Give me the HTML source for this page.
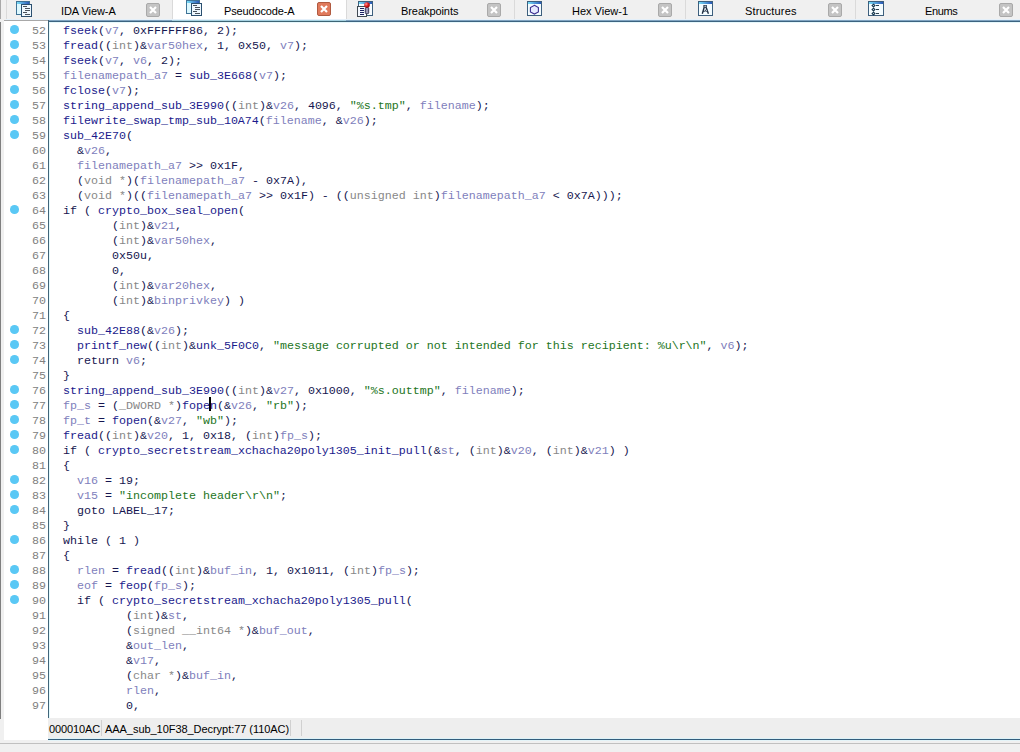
<!DOCTYPE html>
<html><head><meta charset="utf-8">
<style>
*{margin:0;padding:0;box-sizing:border-box}
html,body{width:1020px;height:752px;overflow:hidden;background:#f0f0f0}
body{position:relative;font-family:"Liberation Sans",sans-serif}
.abs{position:absolute}
#lstrip{position:absolute;left:0;top:0;width:1px;height:19px;background:#a9a9a9}
#lstrip2{position:absolute;left:0;top:22px;width:1px;height:697px;background:#7f7f7f}
.sep{position:absolute;top:0;width:1px;height:19px;background:#dadada}
.tab{position:absolute;top:0;height:20px}
.tabtxt{position:absolute;top:5px;font-size:11px;color:#000;white-space:nowrap;line-height:13px}
.close{position:absolute;top:3px;width:14px;height:14px;border-radius:2px;background:#c4c4c4;border:1px solid #a9a9a9}
.close.act{background:#e07a5c;border-color:#b05a40;top:2px}
.close svg{position:absolute;left:-1px;top:-1px}
#gutter{position:absolute;left:4px;top:21px;width:44px;height:719px;background:#fff}
#gtop{position:absolute;left:4px;top:20px;width:44px;height:1px;background:#a8a8a8}
#ctop1{position:absolute;left:48px;top:20px;width:972px;height:1px;background:#7fa3c0}
#tb19{position:absolute;left:6px;top:19px;width:1014px;height:1px;background:#e4f0fa}
#act20{position:absolute;left:172px;top:20px;width:174px;height:1px;background:#a6d2e2}
#ctop2{position:absolute;left:48px;top:21px;width:972px;height:1px;background:#3c6380}
#act21{position:absolute;left:172px;top:21px;width:174px;height:1px;background:#3d6575}
#cleft{position:absolute;left:48px;top:20px;width:1px;height:698px;background:#41657a}
#code{position:absolute;left:49px;top:22px;width:971px;height:696px;background:#fff;overflow:hidden}
#lines{position:absolute;left:14px;top:2px;font-family:"Liberation Mono",monospace;font-size:11.667px;letter-spacing:0;line-height:15px;color:#161650;white-space:pre}
i.f{color:#1a1a8c}
#nums{position:absolute;left:4px;width:42px;top:24px;font-family:"Liberation Mono",monospace;font-size:11.667px;letter-spacing:0;line-height:15px;color:#808080;text-align:right;white-space:pre}
i{font-style:normal}
i.v{color:#8080bc}
i.t{color:#888888}
i.s{color:#237523}
.dot{position:absolute;left:10px;width:8.7px;height:8.6px;border-radius:50%;background:#5ac8f5}
#cursor{position:absolute;left:209px;top:397px;width:2px;height:14px;background:#000}
#status{position:absolute;left:48px;top:718px;width:972px;height:21px;background:#eeeeee}
#sbot{position:absolute;left:48px;top:739px;width:972px;height:1px;background:#335d7c}
#hline{position:absolute;left:0;top:743px;width:1020px;height:1px;background:#c0c0c0}
.stxt{position:absolute;top:723px;font-size:11px;line-height:13px;color:#000;white-space:nowrap}
.ssep{position:absolute;top:720px;width:1px;height:16px;background:#d0d0d0}
</style></head><body>
<div id="lstrip"></div><div id="lstrip2"></div>
<!-- tabs -->
<div class="abs" style="left:172px;top:0;width:174px;height:20px;background:#fff"></div>
<div class="sep" style="left:6px"></div>
<div class="sep" style="left:172px"></div>
<div class="sep" style="left:346px"></div>
<div class="sep" style="left:514px"></div>
<div class="sep" style="left:685px"></div>
<div class="sep" style="left:855px"></div>

<svg width="0" height="0" style="position:absolute"><defs>
<linearGradient id="tg" x1="0" x2="1" y1="0" y2="0"><stop offset="0" stop-color="#78e0fa"/><stop offset="1" stop-color="#2a58b8"/></linearGradient>
<radialGradient id="rb" cx="0.35" cy="0.35" r="0.7"><stop offset="0" stop-color="#ff9a9a"/><stop offset="0.5" stop-color="#e02020"/><stop offset="1" stop-color="#8a0000"/></radialGradient>
</defs></svg>
<svg class="abs" style="left:16px;top:1px" width="17" height="17" shape-rendering="crispEdges"><rect x="0" y="0" width="14" height="14" fill="#3f7396"/><rect x="1" y="1" width="12" height="2" fill="url(#tg)"/><rect x="1" y="3" width="12" height="10" fill="#dcf8ff"/>
<rect x="5" y="3" width="11" height="13" fill="#2b4f6f"/><rect x="6" y="4" width="9" height="11" fill="#eef8ff"/>
<g fill="#4a525c"><rect x="7" y="5" width="4" height="1"/><rect x="9" y="7" width="5" height="1"/><rect x="9" y="9" width="5" height="1"/><rect x="7" y="11" width="4" height="1"/><rect x="9" y="13" width="5" height="1"/></g></svg>
<svg class="abs" style="left:186px;top:0px" width="17" height="17" shape-rendering="crispEdges"><rect x="0" y="0" width="14" height="14" fill="#3f7396"/><rect x="1" y="1" width="12" height="2" fill="url(#tg)"/><rect x="1" y="3" width="12" height="10" fill="#dcf8ff"/>
<rect x="5" y="3" width="11" height="13" fill="#2b4f6f"/><rect x="6" y="4" width="9" height="11" fill="#eef8ff"/>
<g fill="#4a525c"><rect x="7" y="5" width="4" height="1"/><rect x="9" y="7" width="5" height="1"/><rect x="9" y="9" width="5" height="1"/><rect x="7" y="11" width="4" height="1"/><rect x="9" y="13" width="5" height="1"/></g></svg>
<svg class="abs" style="left:357px;top:1px" width="17" height="17">
<g shape-rendering="crispEdges"><rect x="1" y="0" width="15" height="15" fill="#3d5f7d"/><rect x="2" y="1" width="13" height="2" fill="url(#tg)"/><rect x="2" y="3" width="13" height="11" fill="#f8fcff"/>
<rect x="0" y="5" width="10" height="11" fill="#404a52"/><rect x="1" y="6" width="8" height="9" fill="#f4f8ff"/>
<g fill="#1a2060"><rect x="3" y="7" width="4" height="1"/><rect x="3" y="9" width="4" height="1"/><rect x="3" y="11" width="4" height="1"/><rect x="3" y="13" width="4" height="1"/></g></g>
<rect x="8.3" y="6.5" width="3.4" height="6.2" rx="1" fill="#9a98b8" stroke="#2a2a48" stroke-width="0.9"/>
<circle cx="10" cy="4" r="2.8" fill="url(#rb)"/>
</svg>
<svg class="abs" style="left:527px;top:1px" width="16" height="16"><g shape-rendering="crispEdges"><rect x="0" y="0" width="15" height="15" fill="#3d5f7d"/><rect x="1" y="1" width="13" height="2" fill="url(#tg)"/><rect x="1" y="3" width="13" height="11" fill="#f4fcff"/></g>
<polygon points="7.4,4.3 11.4,6.5 11.4,10.9 7.4,13.1 3.4,10.9 3.4,6.5" fill="#e6eaff" stroke="#3b2d8f" stroke-width="1.1"/></svg>
<svg class="abs" style="left:698px;top:1px" width="16" height="16"><g shape-rendering="crispEdges"><rect x="0" y="0" width="15" height="15" fill="#3d5f7d"/><rect x="1" y="1" width="13" height="2" fill="url(#tg)"/><rect x="1" y="3" width="13" height="11" fill="#f4fcff"/></g>
<rect x="5.4" y="4" width="3.4" height="2.8" fill="#1c2c40"/><circle cx="7.1" cy="5.3" r="0.75" fill="#e8eef8"/>
<path d="M6.1 6.6L4.3 12.8M8.2 6.6L10.4 12.8" stroke="#1c2c40" stroke-width="1.4" fill="none"/>
<circle cx="8.4" cy="9.5" r="0.9" fill="#f0f4ff" stroke="#1c2c40" stroke-width="0.8"/><path d="M5.2 10.6L7.6 9.9" stroke="#1c2c40" stroke-width="0.9"/>
</svg>
<svg class="abs" style="left:868px;top:1px" width="16" height="16"><g shape-rendering="crispEdges"><rect x="0" y="0" width="16" height="15" fill="#3d5f7d"/><rect x="1" y="1" width="14" height="2" fill="url(#tg)"/><rect x="1" y="3" width="14" height="11" fill="#f4fcff"/></g>
<g fill="#e0f4ff" stroke="#16364c" stroke-width="1.1"><path d="M5.5 3.2L6.9 4.6L5.5 6L4.1 4.6Z"/><path d="M5.5 7.2L6.9 8.6L5.5 10L4.1 8.6Z"/><path d="M5.5 11.2L6.9 12.6L5.5 14L4.1 12.6Z"/></g>
<g fill="#2a4050" shape-rendering="crispEdges"><rect x="8" y="4" width="3" height="1"/><rect x="8" y="8" width="3" height="1"/><rect x="8" y="12" width="3" height="1"/></g>
</svg>
<div class="tabtxt" style="left:61px;letter-spacing:-0.07px">IDA View-A</div>
<div class="tabtxt" style="left:224px;letter-spacing:-0.15px">Pseudocode-A</div>
<div class="tabtxt" style="left:401px;letter-spacing:-0.07px">Breakpoints</div>
<div class="tabtxt" style="left:572px">Hex View-1</div>
<div class="tabtxt" style="left:745px;letter-spacing:0.14px">Structures</div>
<div class="tabtxt" style="left:925px;letter-spacing:-0.35px">Enums</div>

<div class="close" style="left:146px"><svg width="14" height="14"><path d="M4 4L10 10M10 4L4 10" stroke="#fff" stroke-width="2.2"/></svg></div>
<div class="close act" style="left:317px"><svg width="14" height="14"><path d="M4 4L10 10M10 4L4 10" stroke="#fff" stroke-width="2.2"/></svg></div>
<div class="close" style="left:487px"><svg width="14" height="14"><path d="M4 4L10 10M10 4L4 10" stroke="#fff" stroke-width="2.2"/></svg></div>
<div class="close" style="left:658px"><svg width="14" height="14"><path d="M4 4L10 10M10 4L4 10" stroke="#fff" stroke-width="2.2"/></svg></div>
<div class="close" style="left:828px"><svg width="14" height="14"><path d="M4 4L10 10M10 4L4 10" stroke="#fff" stroke-width="2.2"/></svg></div>
<div class="close" style="left:999px"><svg width="14" height="14"><path d="M4 4L10 10M10 4L4 10" stroke="#fff" stroke-width="2.2"/></svg></div>

<!-- panel -->
<div id="gutter"></div><div id="gtop"></div>
<div id="code"><div id="lines"><div><i class="f">fseek</i>(<i class="v">v7</i>, 0xFFFFFF86, 2);</div><div><i class="f">fread</i>((<i class="t">int</i>)&amp;<i class="v">var50hex</i>, 1, 0x50, <i class="v">v7</i>);</div><div><i class="f">fseek</i>(<i class="v">v7</i>, <i class="v">v6</i>, 2);</div><div><i class="v">filenamepath_a7</i> = <i class="f">sub_3E668</i>(<i class="v">v7</i>);</div><div><i class="f">fclose</i>(<i class="v">v7</i>);</div><div><i class="f">string_append_sub_3E990</i>((<i class="t">int</i>)&amp;<i class="v">v26</i>, 4096, <i class="s">&quot;%s.tmp&quot;</i>, <i class="v">filename</i>);</div><div><i class="f">filewrite_swap_tmp_sub_10A74</i>(<i class="v">filename</i>, &amp;<i class="v">v26</i>);</div><div><i class="f">sub_42E70</i>(</div><div>  &amp;<i class="v">v26</i>,</div><div>  <i class="v">filenamepath_a7</i> &gt;&gt; 0x1F,</div><div>  (<i class="t">void *</i>)(<i class="v">filenamepath_a7</i> - 0x7A),</div><div>  (<i class="t">void *</i>)((<i class="v">filenamepath_a7</i> &gt;&gt; 0x1F) - ((<i class="t">unsigned int</i>)<i class="v">filenamepath_a7</i> &lt; 0x7A)));</div><div>if ( <i class="f">crypto_box_seal_open</i>(</div><div>       (<i class="t">int</i>)&amp;<i class="v">v21</i>,</div><div>       (<i class="t">int</i>)&amp;<i class="v">var50hex</i>,</div><div>       0x50u,</div><div>       0,</div><div>       (<i class="t">int</i>)&amp;<i class="v">var20hex</i>,</div><div>       (<i class="t">int</i>)&amp;<i class="v">binprivkey</i>) )</div><div>{</div><div>  <i class="f">sub_42E88</i>(&amp;<i class="v">v26</i>);</div><div>  <i class="f">printf_new</i>((<i class="t">int</i>)&amp;<i class="f">unk_5F0C0</i>, <i class="s">&quot;message corrupted or not intended for this recipient: %u\r\n&quot;</i>, <i class="v">v6</i>);</div><div>  return <i class="v">v6</i>;</div><div>}</div><div><i class="f">string_append_sub_3E990</i>((<i class="t">int</i>)&amp;<i class="v">v27</i>, 0x1000, <i class="s">&quot;%s.outtmp&quot;</i>, <i class="v">filename</i>);</div><div><i class="v">fp_s</i> = (<i class="t">_DWORD *</i>)<i class="f">fopen</i>(&amp;<i class="v">v26</i>, <i class="s">&quot;rb&quot;</i>);</div><div><i class="v">fp_t</i> = <i class="f">fopen</i>(&amp;<i class="v">v27</i>, <i class="s">&quot;wb&quot;</i>);</div><div><i class="f">fread</i>((<i class="t">int</i>)&amp;<i class="v">v20</i>, 1, 0x18, (<i class="t">int</i>)<i class="v">fp_s</i>);</div><div>if ( <i class="f">crypto_secretstream_xchacha20poly1305_init_pull</i>(&amp;<i class="v">st</i>, (<i class="t">int</i>)&amp;<i class="v">v20</i>, (<i class="t">int</i>)&amp;<i class="v">v21</i>) )</div><div>{</div><div>  <i class="v">v16</i> = 19;</div><div>  <i class="v">v15</i> = <i class="s">&quot;incomplete header\r\n&quot;</i>;</div><div>  goto LABEL_17;</div><div>}</div><div>while ( 1 )</div><div>{</div><div>  <i class="v">rlen</i> = <i class="f">fread</i>((<i class="t">int</i>)&amp;<i class="v">buf_in</i>, 1, 0x1011, (<i class="t">int</i>)<i class="v">fp_s</i>);</div><div>  <i class="v">eof</i> = <i class="f">feop</i>(<i class="v">fp_s</i>);</div><div>  if ( <i class="f">crypto_secretstream_xchacha20poly1305_pull</i>(</div><div>         (<i class="t">int</i>)&amp;<i class="v">st</i>,</div><div>         (<i class="t">signed __int64 *</i>)&amp;<i class="v">buf_out</i>,</div><div>         &amp;<i class="v">out_len</i>,</div><div>         &amp;<i class="v">v17</i>,</div><div>         (<i class="t">char *</i>)&amp;<i class="v">buf_in</i>,</div><div>         <i class="v">rlen</i>,</div><div>         0,</div></div></div>
<div id="tb19"></div><div class="abs" style="left:49px;top:22px;width:1px;height:696px;background:#e2fbff"></div><div class="abs" style="left:49px;top:22px;width:971px;height:1px;background:#e6f8fc"></div><div id="ctop1"></div><div id="ctop2"></div><div id="act20"></div><div id="act21"></div><div id="cleft"></div>
<div id="nums"><div>52</div><div>53</div><div>54</div><div>55</div><div>56</div><div>57</div><div>58</div><div>59</div><div>60</div><div>61</div><div>62</div><div>63</div><div>64</div><div>65</div><div>66</div><div>67</div><div>68</div><div>69</div><div>70</div><div>71</div><div>72</div><div>73</div><div>74</div><div>75</div><div>76</div><div>77</div><div>78</div><div>79</div><div>80</div><div>81</div><div>82</div><div>83</div><div>84</div><div>85</div><div>86</div><div>87</div><div>88</div><div>89</div><div>90</div><div>91</div><div>92</div><div>93</div><div>94</div><div>95</div><div>96</div><div>97</div></div>
<b class="dot" style="top:25px"></b>
<b class="dot" style="top:40px"></b>
<b class="dot" style="top:55px"></b>
<b class="dot" style="top:70px"></b>
<b class="dot" style="top:85px"></b>
<b class="dot" style="top:100px"></b>
<b class="dot" style="top:115px"></b>
<b class="dot" style="top:130px"></b>
<b class="dot" style="top:205px"></b>
<b class="dot" style="top:325px"></b>
<b class="dot" style="top:340px"></b>
<b class="dot" style="top:355px"></b>
<b class="dot" style="top:385px"></b>
<b class="dot" style="top:400px"></b>
<b class="dot" style="top:415px"></b>
<b class="dot" style="top:430px"></b>
<b class="dot" style="top:445px"></b>
<b class="dot" style="top:475px"></b>
<b class="dot" style="top:490px"></b>
<b class="dot" style="top:505px"></b>
<b class="dot" style="top:535px"></b>
<b class="dot" style="top:565px"></b>
<b class="dot" style="top:580px"></b>
<b class="dot" style="top:595px"></b>
<div id="cursor"></div>
<div id="status"></div><div class="abs" style="left:48px;top:738px;width:972px;height:1px;background:#dcf2f8"></div><div id="sbot"></div><div class="abs" style="left:48px;top:740px;width:972px;height:1px;background:#e4f4f8"></div>
<div class="stxt" style="left:49px;letter-spacing:-0.1px">000010AC</div>
<div class="ssep" style="left:101px"></div>
<div class="stxt" style="left:105px;letter-spacing:-0.05px">AAA_sub_10F38_Decrypt:77 (110AC)</div>
<div class="ssep" style="left:290px"></div>
<div class="ssep" style="left:301px"></div>
<div id="hline"></div>
</body></html>
